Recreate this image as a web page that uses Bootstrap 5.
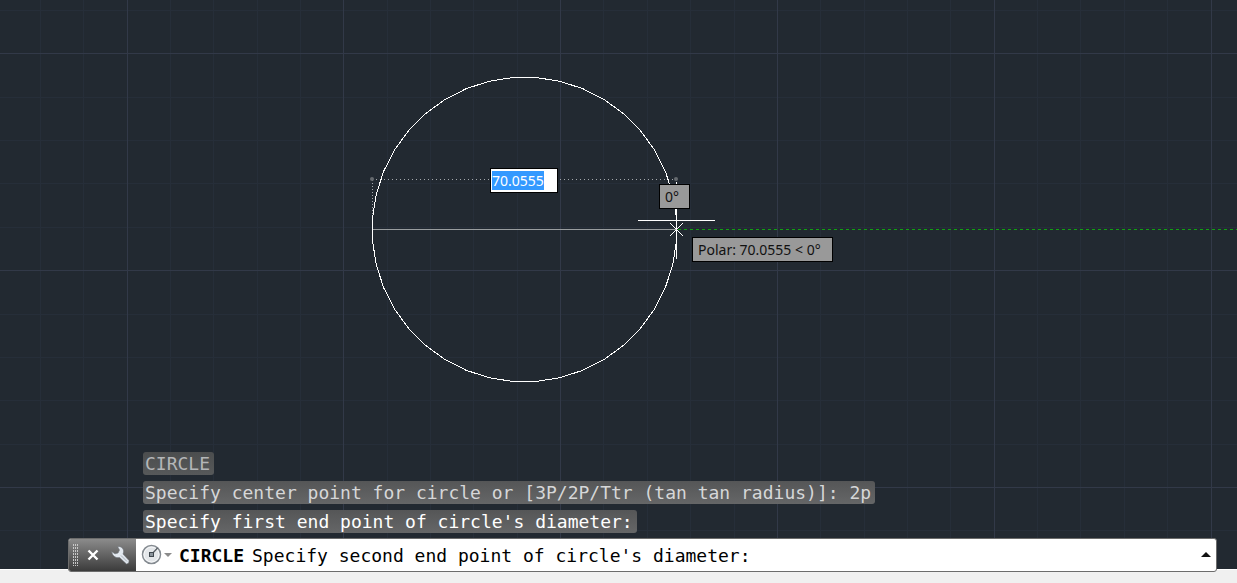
<!DOCTYPE html>
<html lang="en">
<head>
<meta charset="utf-8">
<meta name="viewport" content="width=device-width, initial-scale=1">
<title>CIRCLE command</title>
<link href="https://cdn.jsdelivr.net/npm/bootstrap@5.3.0/dist/css/bootstrap.min.css" rel="stylesheet">
<style>
  body { background: #f0f0f0; font-family: "Noto Sans", "Open Sans", sans-serif; font-size: 14px; }
  .drawing-area { background: #222931; }
  .drawing-area > svg { inset: 0; }
  .page-foot { height: 14px; border-top: 1px solid #fff; }

  /* dynamic input fields placed at the cursor */
  .dyn-tip { background: #999; border: 1px solid #000; color: #111; line-height: 23px; padding: 0 5px; white-space: nowrap; }
  .dyn-angle { left: 659px; top: 184px; width: 31px; }
  .dyn-polar { left: 692px; top: 237px; width: 141px; }
  .dyn-length { left: 490px; top: 168px; width: 68px; height: 25px; border: 1px solid #000; background: #fff; padding: 0 1px; line-height: 23px; outline: 0; }
  .dyn-length::selection { background: #3399ff; color: #fff; }

  /* command line and its history */
  .cmd-dock { left: 68px; right: 20px; bottom: 11px; font-family: "DejaVu Sans Mono", monospace; font-size: 18px; }
  .cmd-history { margin-left: 75px; gap: 6px; padding-bottom: 5px; }
  .cmd-history li { background: linear-gradient(#555657, #656667); border-radius: 3px; padding: 0 4px 0 2px; line-height: 23px; color: #fff; }
  .cmd-history li:nth-child(1) { color: #b4b6b8; background: linear-gradient(#4b4d4e, #57595a); }
  .cmd-history li:nth-child(2) { color: #d6d7d8; }
  .cmd-bar { height: 34px; background: #fff; border: 1px solid #6c6c6c; border-radius: 3px; }
  .cmd-grip { width: 67px; background: linear-gradient(#8b8b8b, #3b3b3b); }
  .cmd-bar button { background: none; border: 0; padding: 0; line-height: 0; }
  .cmd-entry { border: 0; outline: 0; padding: 0; color: #000; background: none; min-width: 0; }
</style>
</head>
<body>
<div class="d-flex flex-column vh-100 position-relative overflow-hidden">
  <main class="drawing-area flex-grow-1 position-relative overflow-hidden">
    <svg class="position-absolute w-100 h-100" shape-rendering="crispEdges" fill="none" aria-hidden="true">
      <path id="gridMinor" stroke="#262e39"/>
      <path id="gridMajor" stroke="#323948"/>
      <line x1="678" y1="229.500" x2="100%" y2="229.500" stroke="#12a012" stroke-dasharray="3 3"/>
      <path d="M372 179.500H676" stroke="#a4a8ac" stroke-dasharray="1 3"/>
      <path d="M372.500 180V229" stroke="#a4a8ac" stroke-dasharray="1 2"/>
      <polygon id="circleShape" stroke="#fff"/>
      <path d="M373 229.500H676" stroke="#999d9f"/>
      <path d="M638 220.500H715M676.500 182V259M670 223L683 236M683 223L670 236" stroke="#fff"/>
      <g fill="#65696e" shape-rendering="auto"><circle cx="372" cy="179" r="2"/><circle cx="676" cy="179" r="2"/></g>
    </svg>
    <input class="dyn-length position-absolute" type="text" value="70.0555" aria-label="Diameter">
    <div class="dyn-tip dyn-angle position-absolute">0°</div>
    <div class="dyn-tip dyn-polar position-absolute">Polar: 70.0555 &lt; 0°</div>
  </main>
  <footer class="page-foot flex-shrink-0"></footer>

  <section class="cmd-dock position-absolute" aria-label="Command line">
    <ul class="cmd-history list-unstyled d-flex flex-column align-items-start mb-0">
      <li>CIRCLE</li>
      <li>Specify center point for circle or [3P/2P/Ttr (tan tan radius)]: 2p</li>
      <li>Specify first end point of circle's diameter:</li>
    </ul>
    <div class="cmd-bar d-flex align-items-stretch overflow-hidden">
      <div class="cmd-grip d-flex align-items-center flex-shrink-0">
        <svg width="17" height="32" aria-hidden="true"><path d="M4.500 5V27M6.500 5V27M8.500 5V27" stroke="#c8c8c8" stroke-dasharray="2 1" shape-rendering="crispEdges"/></svg>
        <button type="button" aria-label="Close"><svg width="14" height="14" viewBox="0 0 14 14"><path d="M2.500 2.500L11.500 11.500M11.500 2.500L2.500 11.500" stroke="#fff" stroke-width="2.400"/></svg></button>
        <button type="button" class="ms-1 ps-1" aria-label="Customize"><svg width="22" height="22" viewBox="0 0 22 22"><path d="M9.500 2.500Q14 2 15.500 6Q16 8 15 10L21 16.500Q21.500 19.500 18.500 20L11.500 13.500Q5 14.500 3.500 7.500L7 9.800L10 9L11.500 6Z" fill="#e2e8ef" stroke="#6c7075" stroke-width=".6"/><path d="M13 11.500L19 17.500" stroke="#a8b0b8"/></svg></button>
      </div>
      <button type="button" class="d-flex align-items-center ms-1 flex-shrink-0" aria-label="Recent commands">
        <svg width="39" height="32" viewBox="0 0 39 32"><circle cx="11.500" cy="15.500" r="9" fill="#e3e6e9" stroke="#858b91" stroke-width="1.500"/><circle cx="11.500" cy="15.500" r="7.500" fill="none" stroke="#f7f8f9"/><path d="M11.500 15.500L17.500 9" stroke="#555b61" stroke-width="1.200"/><rect x="9.500" y="13.500" width="4" height="4" fill="#8b949c" stroke="#3f474e"/><path d="M24 14H32L28 18Z" fill="#8b8b8b"/></svg>
      </button>
      <label for="cmd" class="d-flex align-items-center fw-bold text-black">CIRCLE</label>
      <input id="cmd" class="cmd-entry flex-grow-1 ms-2" type="text" value="Specify second end point of circle's diameter:">
      <button type="button" class="flex-shrink-0 px-1" aria-label="Show history"><svg width="12" height="8" viewBox="0 0 12 8"><path d="M1 6L6 1L11 6Z" fill="#111"/></svg></button>
    </div>
  </section>
</div>
<script src="https://cdn.jsdelivr.net/npm/bootstrap@5.3.0/dist/js/bootstrap.bundle.min.js"></script>
<script>
  // grid lines: every fifth one is a major line
  const step = 43.36, originX = 127, originY = 53.9;
  function drawGrid() {
    const { width, height } = document.querySelector('.drawing-area').getBoundingClientRect();
    const d = { gridMinor: '', gridMajor: '' };
    const kind = k => k % 5 ? 'gridMinor' : 'gridMajor';
    for (let k = -2; originX + k * step < width; k++) d[kind(k)] += `M${Math.floor(originX + k * step) + .5} 0V${height}`;
    for (let k = -1; originY + k * step < height; k++) d[kind(k)] += `M0 ${Math.floor(originY + k * step) + .5}H${width}`;
    for (const id in d) document.getElementById(id).setAttribute('d', d[id]);
  }
  // the viewport shows circles as 40-sided polygons
  const sides = 40, radius = 152.4;
  const points = Array.from({ length: sides }, (_, i) => {
    const a = (i + .5) * 2 * Math.PI / sides;
    return `${524.5 + radius * Math.cos(a)},${229.5 + radius * Math.sin(a)}`;
  });
  document.getElementById('circleShape').setAttribute('points', points.join(' '));
  drawGrid();
  addEventListener('resize', drawGrid);
  document.querySelector('.dyn-length').select();
</script>
</body>
</html>
